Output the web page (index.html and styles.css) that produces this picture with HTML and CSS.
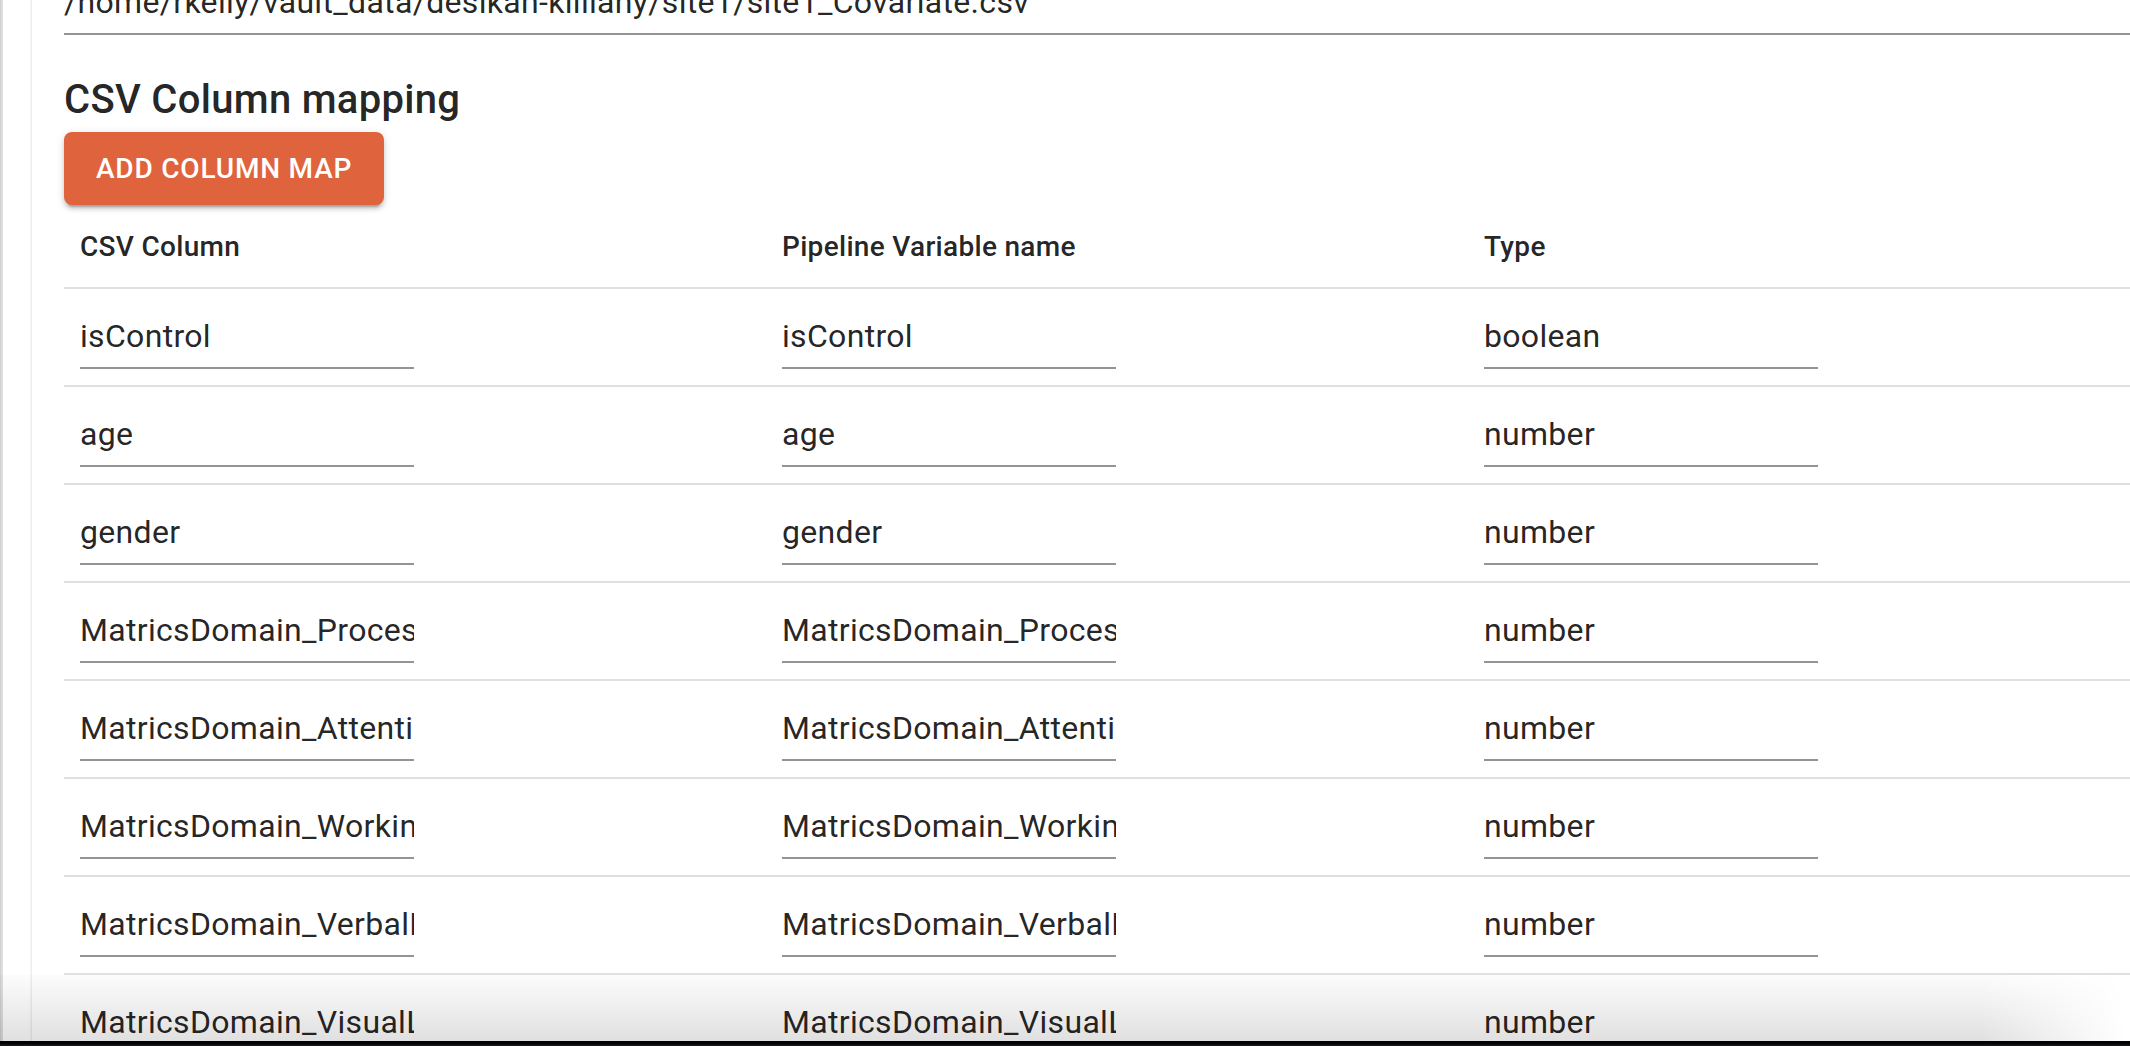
FILE: index.html
```html
<!DOCTYPE html>
<html lang="en">
<head>
<meta charset="utf-8">
<title>CSV Column mapping</title>
<link rel="stylesheet" href="styles.css">
</head>
<body>
<div class="screen">
  <div class="rail"></div>
  <main class="card">
    <div class="path-field">
      <input class="field-input" type="text" readonly value="/home/rkelly/vault_data/desikan-killiany/site1/site1_Covariate.csv">
    </div>
    <h2 class="section-title">CSV Column mapping</h2>
    <button class="btn" type="button">Add column map</button>
    <div class="map-table">
      <div class="map-row map-head">
        <div class="cell head">CSV Column</div>
        <div class="cell head">Pipeline Variable name</div>
        <div class="cell head">Type</div>
        <div class="cell head"></div>
      </div>
      <div class="map-row">
        <div class="cell"><input class="field-input cell-input" readonly value="isControl"></div>
        <div class="cell"><input class="field-input cell-input" readonly value="isControl"></div>
        <div class="cell"><input class="field-input cell-input" readonly value="boolean"></div>
        <div class="cell"></div>
      </div>
      <div class="map-row">
        <div class="cell"><input class="field-input cell-input" readonly value="age"></div>
        <div class="cell"><input class="field-input cell-input" readonly value="age"></div>
        <div class="cell"><input class="field-input cell-input" readonly value="number"></div>
        <div class="cell"></div>
      </div>
      <div class="map-row">
        <div class="cell"><input class="field-input cell-input" readonly value="gender"></div>
        <div class="cell"><input class="field-input cell-input" readonly value="gender"></div>
        <div class="cell"><input class="field-input cell-input" readonly value="number"></div>
        <div class="cell"></div>
      </div>
      <div class="map-row">
        <div class="cell"><input class="field-input cell-input" readonly value="MatricsDomain_ProcessingSpeed"></div>
        <div class="cell"><input class="field-input cell-input" readonly value="MatricsDomain_ProcessingSpeed"></div>
        <div class="cell"><input class="field-input cell-input" readonly value="number"></div>
        <div class="cell"></div>
      </div>
      <div class="map-row">
        <div class="cell"><input class="field-input cell-input" readonly value="MatricsDomain_Attention"></div>
        <div class="cell"><input class="field-input cell-input" readonly value="MatricsDomain_Attention"></div>
        <div class="cell"><input class="field-input cell-input" readonly value="number"></div>
        <div class="cell"></div>
      </div>
      <div class="map-row">
        <div class="cell"><input class="field-input cell-input" readonly value="MatricsDomain_WorkingMemory"></div>
        <div class="cell"><input class="field-input cell-input" readonly value="MatricsDomain_WorkingMemory"></div>
        <div class="cell"><input class="field-input cell-input" readonly value="number"></div>
        <div class="cell"></div>
      </div>
      <div class="map-row">
        <div class="cell"><input class="field-input cell-input" readonly value="MatricsDomain_VerbalLearning"></div>
        <div class="cell"><input class="field-input cell-input" readonly value="MatricsDomain_VerbalLearning"></div>
        <div class="cell"><input class="field-input cell-input" readonly value="number"></div>
        <div class="cell"></div>
      </div>
      <div class="map-row">
        <div class="cell"><input class="field-input cell-input" readonly value="MatricsDomain_VisualLearning"></div>
        <div class="cell"><input class="field-input cell-input" readonly value="MatricsDomain_VisualLearning"></div>
        <div class="cell"><input class="field-input cell-input" readonly value="number"></div>
        <div class="cell"></div>
      </div>
    </div>
  </main>
</div>
<div class="bottom-shade"></div>
<div class="bottom-bar"></div>
</body>
</html>
```

FILE: styles.css
```css
html, body {
  margin: 0;
  height: 100%;
  overflow: hidden;
  background: #ffffff;
}

body {
  font-family: Roboto, "Noto Sans", "Liberation Sans", sans-serif;
  color: rgba(0, 0, 0, 0.87);
}

.screen {
  display: flex;
  height: 1046px;
  overflow: hidden;
}

.rail {
  flex: none;
  width: 3px;
  background: linear-gradient(to right, #cfcfcf, #e4e4e4);
}

.card {
  flex: none;
  box-sizing: border-box;
  width: 2200px;
  margin-left: 29px;
  margin-top: -29px;
  padding-left: 32px;
  background: #ffffff;
  box-shadow: -1px 0 2px rgba(0, 0, 0, 0.10);
}

.path-field {
  width: 100%;
}

.field-input {
  display: block;
  box-sizing: border-box;
  width: 100%;
  height: 64px;
  margin: 0;
  padding: 12px 0;
  border: 0;
  border-bottom: 2px solid #949494;
  border-radius: 0;
  background: transparent;
  outline: none;
  font-family: Roboto, "Noto Sans", sans-serif;
  font-size: 32px;
  font-weight: 400;
  line-height: 38px;
  letter-spacing: 0.32px;
  color: rgba(0, 0, 0, 0.87);
}

.section-title {
  margin: 33px 0 0;
  font-size: 40px;
  font-weight: 500;
  line-height: 64px;
  letter-spacing: 0.3px;
}

.btn {
  display: block;
  height: 73px;
  padding: 0 32px;
  border: 0;
  border-radius: 8px;
  background: #df633c;
  color: #ffffff;
  font-family: Roboto, "Noto Sans", sans-serif;
  font-size: 28px;
  font-weight: 500;
  letter-spacing: 0.8px;
  text-transform: uppercase;
  box-shadow: 0 6px 2px -4px rgba(0, 0, 0, 0.2),
              0 4px 4px 0 rgba(0, 0, 0, 0.14),
              0 2px 10px 0 rgba(0, 0, 0, 0.12);
  cursor: pointer;
}

.map-table {
  width: 100%;
}

.map-row {
  display: grid;
  grid-template-columns: 702px 702px 702px 1fr;
  border-bottom: 2px solid #e0e0e0;
}

.cell {
  padding: 16px 0 16px 16px;
}

.cell.head {
  padding: 22px 0 20px 16px;
  font-size: 28px;
  font-weight: 500;
  line-height: 40px;
  letter-spacing: 0.3px;
  white-space: nowrap;
}

.cell-input {
  width: 334px;
}

.bottom-shade {
  position: fixed;
  left: 0;
  right: 0;
  bottom: 5px;
  height: 66px;
  background: linear-gradient(to bottom, rgba(0, 0, 0, 0.01), rgba(0, 0, 0, 0.12));
  -webkit-mask-image: linear-gradient(to right, #000 1980px, transparent 2125px);
  mask-image: linear-gradient(to right, #000 1980px, transparent 2125px);
  pointer-events: none;
}

.bottom-bar {
  position: fixed;
  left: 0;
  right: 0;
  bottom: 0;
  height: 5px;
  background: linear-gradient(to bottom, #000000 40%, #1c1c1e);
}
```
